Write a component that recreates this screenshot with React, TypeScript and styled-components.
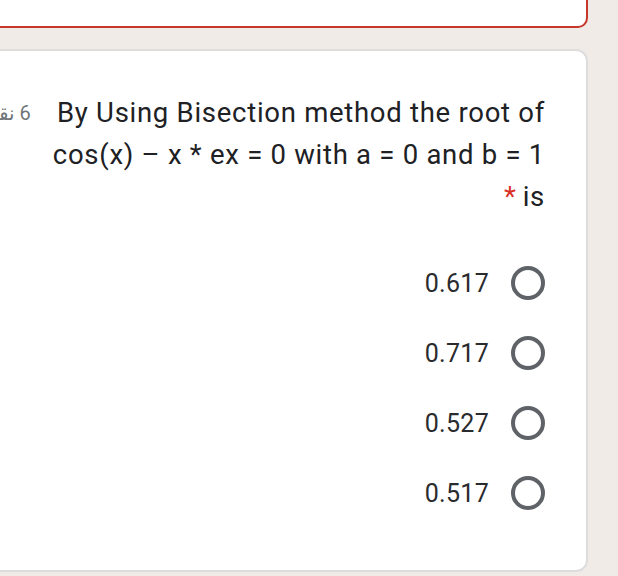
import React from "react";
import styled, { createGlobalStyle } from "styled-components";

const GlobalStyle = createGlobalStyle`
  html { direction: rtl; }
  body {
    margin: 0;
    background: #f1ebe7;
    font-family: Roboto, "Noto Sans", Arial, sans-serif;
    overflow: hidden;
  }
`;

const Page = styled.div`
  width: 700px;
  display: flex;
  flex-direction: column;
  gap: 21px;
  padding-right: 30px;
  box-sizing: border-box;
`;

const TopCard = styled.div`
  height: 28px;
  background: #ffffff;
  border-right: 2px solid #c5362b;
  border-bottom: 2px solid #c5362b;
  border-bottom-right-radius: 10px;
  box-sizing: border-box;
`;

const Card = styled.section`
  background: #ffffff;
  border: 2px solid #dddddd;
  border-radius: 12px;
  padding: 41px 41px 42px 0;
  box-sizing: border-box;
`;

const Header = styled.div`
  display: flex;
  align-items: flex-start;
  gap: 22px;
`;

const Title = styled.div`
  direction: ltr;
  text-align: right;
  font-family: Roboto, "Noto Sans", sans-serif;
  font-size: 27.5px;
  letter-spacing: 0.72px;
  line-height: 42px;
  color: #202124;
`;

const Required = styled.span`
  color: #d93025;
  margin-right: 6px;
`;

const Points = styled.div`
  direction: rtl;
  font-family: Roboto, "Noto Sans", sans-serif;
  font-size: 20px;
  line-height: 42px;
  color: #70757a;
  white-space: nowrap;
`;

const Options = styled.div`
  margin-top: 30px;
  display: flex;
  flex-direction: column;
`;

const Option = styled.label`
  height: 70px;
  display: flex;
  align-items: center;
  gap: 22px;
`;

const Radio = styled.span`
  width: 34px;
  height: 34px;
  border: 4px solid #5f6368;
  border-radius: 50%;
  box-sizing: border-box;
  flex: none;
`;

const OptionText = styled.span`
  font-family: Roboto, "Noto Sans", sans-serif;
  font-size: 25px;
  color: #2a2b2e;
  letter-spacing: 0.3px;
`;

const options = ["0.617", "0.717", "0.527", "0.517"];

export default function App() {
  return (
    <>
      <GlobalStyle />
      <Page>
        <TopCard />
        <Card>
          <Header>
            <Title>
              By Using Bisection method the root of
              <br />
              cos(x) – x * ex = 0 with a = 0 and b = 1
              <br />
              <Required>*</Required>is
            </Title>
            <Points>6 نقاط</Points>
          </Header>
          <Options>
            {options.map((o) => (
              <Option key={o}>
                <Radio />
                <OptionText>{o}</OptionText>
              </Option>
            ))}
          </Options>
        </Card>
      </Page>
    </>
  );
}
